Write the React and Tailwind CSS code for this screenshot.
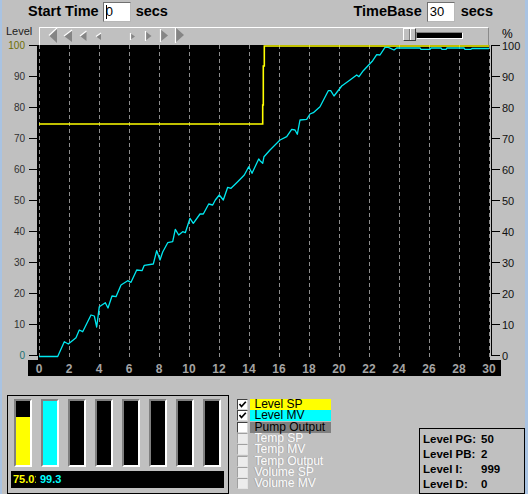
import React from 'react'

const MV = [
  [39, 356.5], [57.7, 356.5], [64.3, 341.7], [68.3, 344], [76, 337.7], [79.3, 330], [82.7, 331.7], [91, 315], [94.3, 316],
  [96.7, 327], [99.3, 306.7], [105.3, 302.7], [108, 308], [112, 296], [116, 296.7], [121, 285], [127.7, 280.7], [131, 282.3],
  [136.7, 270], [142, 270.7], [144.3, 265.3], [153.3, 264], [156.7, 250.7], [160, 260], [162.7, 252], [167.7, 242.7],
  [172.7, 241.7], [175.3, 229.3], [178.7, 235], [182.7, 231.7], [185.3, 232.7], [190, 218.3], [193.3, 223.3], [200, 214],
  [203.3, 214], [208.7, 204], [212.7, 205], [215.3, 200], [219.3, 195], [223.3, 200], [227.7, 187.3], [231, 188.3],
  [237.7, 181.7], [244.3, 175], [248.7, 166.7], [252, 173.3], [258.7, 159], [260, 160.7], [262.7, 163.3], [264, 156.7],
  [270, 150], [280, 140], [286.7, 136.7], [291.7, 129.3], [295, 130], [297.3, 134.3], [300, 120], [306.7, 119.3], [310, 114],
  [313.3, 112.7], [320, 106.7], [328.3, 90.7], [330.7, 90.7], [334, 96], [341.7, 86], [350, 80], [356.7, 75], [359, 76.7],
  [363.3, 70.7], [372.7, 60.7], [376.7, 54.7], [380, 55], [385, 47.3], [388.3, 47.3], [394, 50], [396.7, 48], [420, 48],
  [421, 49.3], [430, 49.3], [431, 48], [441, 48], [442, 49.3], [446, 49.3], [447, 48], [464, 48], [465, 49.3], [471, 49.3],
  [472, 48.5], [489, 48.5],
]

const SP = [[39, 124], [262.7, 124], [262.7, 105], [263.3, 105], [263.3, 66], [264.3, 66], [264.3, 46], [489, 46]]

const toPts = (arr) => arr.map(p => p.join(',')).join(' ')
const yOf = (v) => 356 - v * 3.1

const arrows = [
  ['l', 49, 57, 35.5, 15], ['l', 64, 72, 36, 12], ['l', 80, 86.5, 36, 10], ['l', 96, 101, 36.5, 7],
  ['r', 130, 135, 36.5, 7], ['r', 145, 151.5, 36, 10], ['r', 160, 168, 35.5, 13], ['r', 175, 184, 35, 16],
]

function Field({ value, caret }) {
  return (
    <div className="w-[28px] h-[20px] bg-white border border-[#b8b8b8] border-t-[#707070] border-l-[#707070] flex items-center pl-[2px] text-[13px] font-normal">
      {caret && <div className="w-[1px] h-[14px] bg-black mr-[-1px]" />}
      <span>{value}</span>
    </div>
  )
}

function Chart() {
  const ticks = [0, 1, 2, 3, 4, 5, 6, 7, 8, 9, 10]
  const grid = ticks.concat([11, 12, 13, 14, 15])
  return (
    <svg width="523" height="331" viewBox="2 45 523 331" className="block shrink-0 overflow-visible">
      <rect x="38" y="45" width="452" height="331" fill="#000" />
      <rect x="28" y="360" width="473" height="16" fill="#000" />
      {grid.map(i => (
        <line key={i} x1={39.5 + i * 30} y1="45" x2={39.5 + i * 30} y2="358" stroke="#8c8c8c" strokeWidth="1" strokeDasharray="4 3" />
      ))}
      <line x1="37.5" y1="45" x2="37.5" y2="356" stroke="#000" />
      <line x1="491.5" y1="45" x2="491.5" y2="356" stroke="#000" />
      {ticks.map(i => {
        const y = Math.round(yOf(i * 10)) - 0.5
        const fill = i === 10 ? '#6e6e00' : i === 0 ? '#1e7070' : '#303030'
        return (
          <g key={i}>
            <line x1="29" y1={y} x2="38" y2={y} stroke="#000" />
            <line x1="491" y1={y} x2="500" y2={y} stroke="#000" />
            <text x="25" y={y + 3.5} textAnchor="end" fontSize="10" fill={fill} fontFamily="'Liberation Sans', Arial, sans-serif">{i * 10}</text>
            <text x="502" y={y + 4} fontSize="11" fill="#111" fontFamily="'Liberation Sans', Arial, sans-serif">{i * 10}</text>
          </g>
        )
      })}
      <polyline points={toPts(SP)} fill="none" stroke="#ffff00" strokeWidth="1.6" />
      <polyline points={toPts(MV)} fill="none" stroke="#00e8f0" strokeWidth="1.3" strokeLinejoin="round" />
      {grid.map(i => (
        <text key={i} x={39 + i * 30} y="372.5" textAnchor="middle" fontSize="12" fontWeight="bold" fill="#a4a4a4" fontFamily="'Liberation Sans', Arial, sans-serif">{i * 2}</text>
      ))}
    </svg>
  )
}

function Arrows() {
  return (
    <svg width="146" height="17" viewBox="40 28 146 17" className="block shrink-0">
      {arrows.map(([d, a, b, cy, h], i) => {
        const top = cy - h / 2
        const bot = cy + h / 2
        if (d === 'l') {
          return (
            <g key={i}>
              <polygon points={`${a},${cy} ${b},${top} ${b},${bot}`} fill="#858585" />
              <polyline points={`${a},${cy} ${b},${top}`} fill="none" stroke="#fff" strokeWidth="1.2" />
            </g>
          )
        }
        return (
          <g key={i}>
            <polygon points={`${a},${top} ${b},${cy} ${a},${bot}`} fill="#858585" />
            <line x1={a + 0.5} y1={top} x2={a + 0.5} y2={bot} stroke="#fff" strokeWidth="1.2" />
          </g>
        )
      })}
    </svg>
  )
}

function Bar({ fill, pct }) {
  return (
    <div className="w-[18px] h-[68px] border-2 border-t-[#808080] border-l-[#808080] border-r-white border-b-white bg-black flex flex-col justify-end">
      {fill && <div className={fill} style={{ height: `${pct * 0.64}px` }} />}
    </div>
  )
}

const pens = [
  { name: 'Level SP', bg: 'bg-[#ffff00]', on: true, checked: true },
  { name: 'Level MV', bg: 'bg-[#00ffff]', on: true, checked: true },
  { name: 'Pump Output', bg: 'bg-[#808080]', on: true, checked: false },
  { name: 'Temp SP' },
  { name: 'Temp MV' },
  { name: 'Temp Output' },
  { name: 'Volume SP' },
  { name: 'Volume MV' },
]

function PenRow({ pen }) {
  return (
    <div className="h-[11.3px] flex items-center">
      {pen.on ? (
        <div className="w-[11px] h-[11px] shrink-0 bg-white border border-t-[#404040] border-l-[#404040] border-r-[#d8d8d8] border-b-[#d8d8d8]">
          {pen.checked && (
            <svg width="9" height="9" viewBox="0 0 9 9" className="block">
              <path d="M1.5 4 L3.5 6.5 L7.8 1.8" fill="none" stroke="#000" strokeWidth="1.7" />
            </svg>
          )}
        </div>
      ) : (
        <div className="w-[11px] h-[11px] shrink-0 bg-[#ececec] border border-t-[#a0a0a0] border-l-[#a0a0a0] border-r-[#e4e4e4] border-b-[#e4e4e4]" />
      )}
      {pen.on ? (
        <div className={`ml-[1.5px] w-[81px] h-[11px] pl-[5px] text-[12px] leading-[11px] whitespace-nowrap ${pen.bg}`}>{pen.name}</div>
      ) : (
        <div className="ml-[1.5px] w-[81px] h-[11px] pl-[5px] text-[12px] leading-[11px] whitespace-nowrap text-[#fbfbfb] [text-shadow:-1px_0_0_#a4a4a4]">{pen.name}</div>
      )}
    </div>
  )
}

export default function App() {
  const pid = [['Level PG:', '50'], ['Level PB:', '2'], ['Level I:', '999'], ['Level D:', '0']]
  return (
    <div className="w-[528px] h-[494px] bg-[#c0c0c0] border-l-2 border-r-[3px] border-[#a9c3e2] overflow-hidden flex flex-col font-['Liberation_Sans',Arial,sans-serif] text-black">
      {/* header */}
      <div className="h-[24px] flex items-center shrink-0">
        <div className="ml-[26px] flex items-center">
          <span className="text-[14.5px] font-bold">Start Time</span>
          <div className="ml-[4px]"><Field value="0" caret /></div>
          <span className="ml-[5px] text-[14.5px] font-bold">secs</span>
        </div>
        <div className="ml-auto mr-[32px] flex items-center">
          <span className="text-[14.5px] font-bold">TimeBase</span>
          <div className="ml-[5px]"><Field value="30" /></div>
          <span className="ml-[6px] text-[14.5px] font-bold">secs</span>
        </div>
      </div>

      {/* scroller row */}
      <div className="h-[21px] flex items-start shrink-0">
        <div className="w-[37px] pl-[4px] pt-[1px] text-[11px] leading-[13px] text-[#202020]">Level</div>
        <div className="mt-[3px] w-[450px] h-[18px] border-t border-l border-white border-r border-r-[#8a8a8a] flex items-start">
          <Arrows />
          <div className="ml-[217px] w-[13px] h-[13px] border border-t-white border-l-white border-r-[#404040] border-b-[#404040] bg-[#c0c0c0] flex justify-center">
            <div className="w-[1px] h-full bg-[#808080]" />
            <div className="w-[1px] h-full bg-white" />
          </div>
          <div className="mt-[4px] w-[47px] h-[7px] bg-black border border-t-[#808080] border-l-[#808080] border-r-white border-b-white" />
        </div>
        <div className="ml-[13px] mt-[4px] text-[12px] leading-[13px]">%</div>
      </div>

      <Chart />

      {/* bottom */}
      <div className="h-[118px] flex items-start shrink-0">
        <div className="ml-[5px] mt-[19px] w-[222px] h-[99px] border border-black shrink-0">
          <div className="pt-[3px] pl-[6px] flex gap-[9px]">
            <Bar fill="bg-[#ffff00]" pct={75.0} />
            <Bar fill="bg-[#00ffff]" pct={99.3} />
            <Bar />
            <Bar />
            <Bar />
            <Bar />
            <Bar />
            <Bar />
          </div>
          <div className="ml-[3px] mt-[4px] w-[213px] h-[17px] bg-black flex items-center text-[11px] font-bold">
            <div className="w-[25px] pl-[2px] overflow-hidden whitespace-nowrap text-[#ffff00]">75.01</div>
            <div className="ml-[2px] w-[25px] pl-[2px] overflow-hidden whitespace-nowrap text-[#00ffff]">99.3</div>
          </div>
        </div>

        <div className="ml-[8px] mt-[23px] flex flex-col shrink-0">
          {pens.map(p => <PenRow key={p.name} pen={p} />)}
        </div>

        <div className="ml-auto mt-[52px] w-[106px] h-[66px] border border-black pt-[3px] text-[11.5px] font-bold shrink-0">
          {pid.map(([k, v]) => (
            <div key={k} className="h-[15px] flex items-center">
              <div className="w-[61px] pl-[3px]">{k}</div>
              <div>{v}</div>
            </div>
          ))}
        </div>
      </div>
    </div>
  )
}
